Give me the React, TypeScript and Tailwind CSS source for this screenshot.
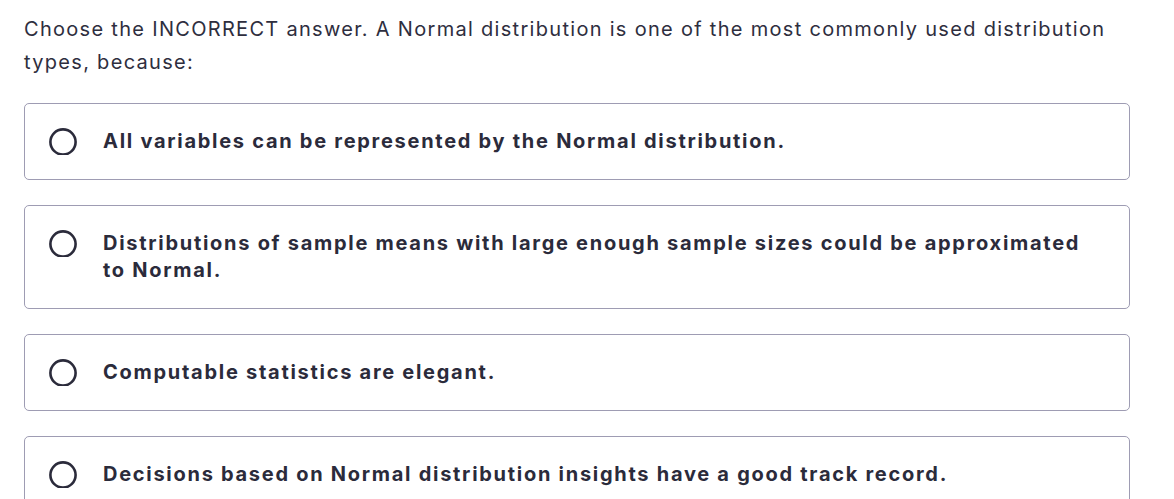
import React from "react";

const options = [
  "All variables can be represented by the Normal distribution.",
  "Distributions of sample means with large enough sample sizes could be approximated to Normal.",
  "Computable statistics are elegant.",
  "Decisions based on Normal distribution insights have a good track record.",
];

const RadioCircle: React.FC = () => (
  <svg width="28" height="27" viewBox="0 0 28 27" className="shrink-0">
    <circle cx="14" cy="14" r="12.6" fill="none" stroke="#2b2b3b" strokeWidth="2.6" />
  </svg>
);

const Option: React.FC<{ label: string }> = ({ label }) => (
  <label className="flex items-start rounded-[5px] border border-[#9e9cb3] bg-white py-6 pl-[24px] pr-[44px] cursor-pointer">
    <div className="mr-[26px]">
      <RadioCircle />
    </div>
    <span className="text-[20px] leading-[27px] font-bold tracking-[1.72px] text-[#2b2b3b]">{label}</span>
  </label>
);

export default function App() {
  return (
    <div
      className="min-h-screen bg-white pl-6 pr-[44px] pt-[13px]"
      style={{ fontFamily: "Inter, 'Liberation Sans', sans-serif" }}
    >
      <p className="mb-6 text-[20px] leading-[33px] tracking-[1.3px] text-[#2e2e3e]">
        Choose the INCORRECT answer. A Normal distribution is one of the most commonly used distribution types, because:
      </p>
      <div className="flex flex-col gap-[25px]">
        {options.map((o) => (
          <Option key={o} label={o} />
        ))}
      </div>
    </div>
  );
}
